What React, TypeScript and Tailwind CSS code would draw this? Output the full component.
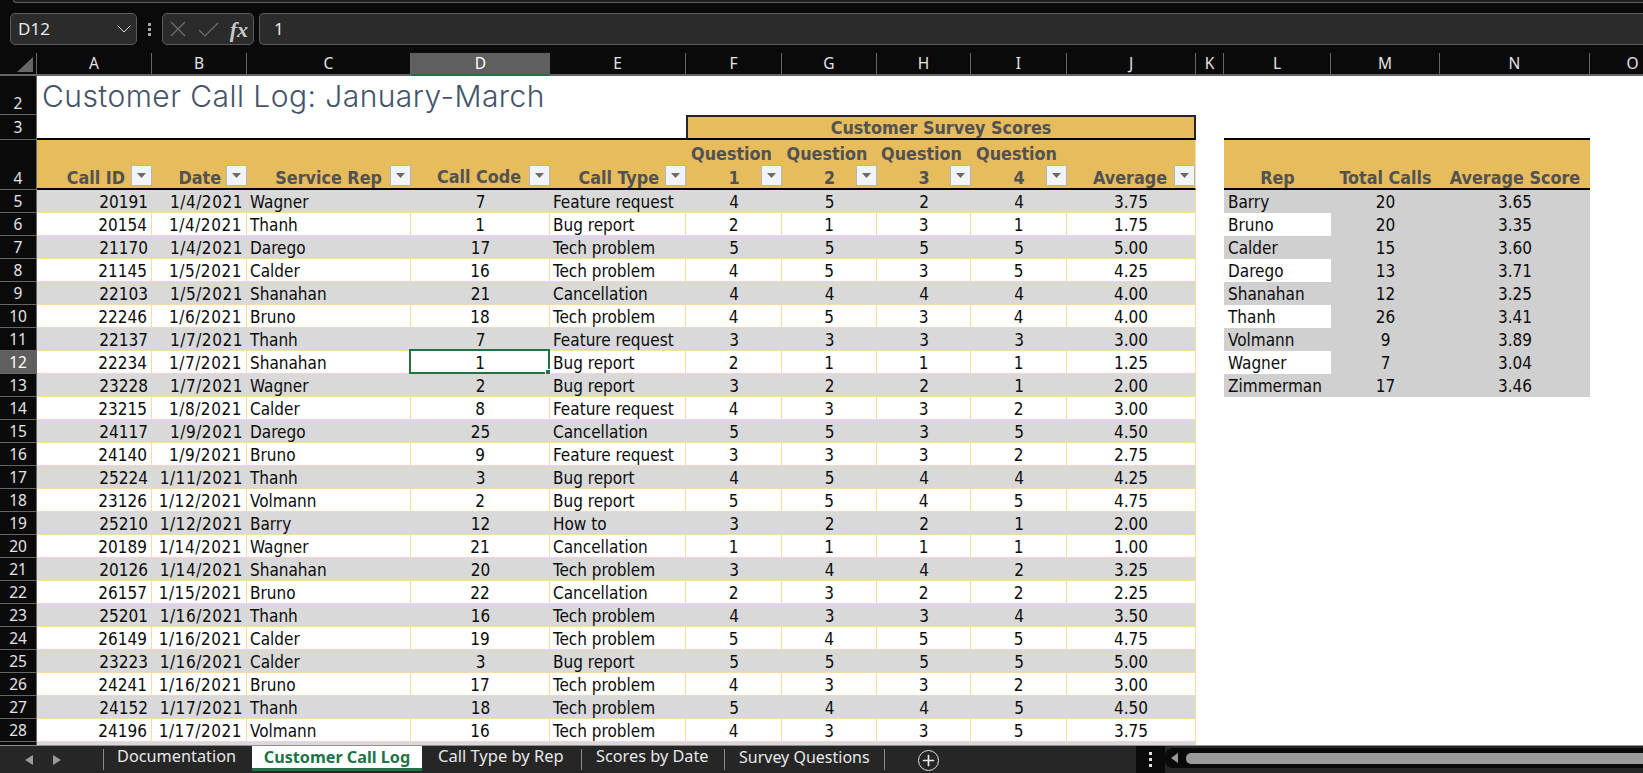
import React from "react";
import { ChevronDown, Plus } from "lucide-react";

const GRID = "grid grid-cols-[37px_115px_95px_164px_139px_136px_96px_95px_94px_96px_129px_28px_107px_109px_150px_86px]";
const CELLFONT = "font-['DejaVu_Sans_Condensed','DejaVu_Sans',sans-serif] text-[17px] pt-[2px] leading-[20px] text-[#0c0c0c]";
const HEADFONT = "font-['DejaVu_Sans_Condensed','DejaVu_Sans',sans-serif] font-bold text-[17.8px] text-[#525252]";
const UIFONT = "font-['Noto_Sans','Open_Sans',sans-serif]";

const DATA: [string, string, string, string, string, string, string, string, string, string][] = [
  ["20191", "1/4/2021", "Wagner", "7", "Feature request", "4", "5", "2", "4", "3.75"],
  ["20154", "1/4/2021", "Thanh", "1", "Bug report", "2", "1", "3", "1", "1.75"],
  ["21170", "1/4/2021", "Darego", "17", "Tech problem", "5", "5", "5", "5", "5.00"],
  ["21145", "1/5/2021", "Calder", "16", "Tech problem", "4", "5", "3", "5", "4.25"],
  ["22103", "1/5/2021", "Shanahan", "21", "Cancellation", "4", "4", "4", "4", "4.00"],
  ["22246", "1/6/2021", "Bruno", "18", "Tech problem", "4", "5", "3", "4", "4.00"],
  ["22137", "1/7/2021", "Thanh", "7", "Feature request", "3", "3", "3", "3", "3.00"],
  ["22234", "1/7/2021", "Shanahan", "1", "Bug report", "2", "1", "1", "1", "1.25"],
  ["23228", "1/7/2021", "Wagner", "2", "Bug report", "3", "2", "2", "1", "2.00"],
  ["23215", "1/8/2021", "Calder", "8", "Feature request", "4", "3", "3", "2", "3.00"],
  ["24117", "1/9/2021", "Darego", "25", "Cancellation", "5", "5", "3", "5", "4.50"],
  ["24140", "1/9/2021", "Bruno", "9", "Feature request", "3", "3", "3", "2", "2.75"],
  ["25224", "1/11/2021", "Thanh", "3", "Bug report", "4", "5", "4", "4", "4.25"],
  ["23126", "1/12/2021", "Volmann", "2", "Bug report", "5", "5", "4", "5", "4.75"],
  ["25210", "1/12/2021", "Barry", "12", "How to", "3", "2", "2", "1", "2.00"],
  ["20189", "1/14/2021", "Wagner", "21", "Cancellation", "1", "1", "1", "1", "1.00"],
  ["20126", "1/14/2021", "Shanahan", "20", "Tech problem", "3", "4", "4", "2", "3.25"],
  ["26157", "1/15/2021", "Bruno", "22", "Cancellation", "2", "3", "2", "2", "2.25"],
  ["25201", "1/16/2021", "Thanh", "16", "Tech problem", "4", "3", "3", "4", "3.50"],
  ["26149", "1/16/2021", "Calder", "19", "Tech problem", "5", "4", "5", "5", "4.75"],
  ["23223", "1/16/2021", "Calder", "3", "Bug report", "5", "5", "5", "5", "5.00"],
  ["24241", "1/16/2021", "Bruno", "17", "Tech problem", "4", "3", "3", "2", "3.00"],
  ["24152", "1/17/2021", "Thanh", "18", "Tech problem", "5", "4", "4", "5", "4.50"],
  ["24196", "1/17/2021", "Volmann", "16", "Tech problem", "4", "3", "3", "5", "3.75"],
];

const SIDE: [string, string, string][] = [
  ["Barry", "20", "3.65"],
  ["Bruno", "20", "3.35"],
  ["Calder", "15", "3.60"],
  ["Darego", "13", "3.71"],
  ["Shanahan", "12", "3.25"],
  ["Thanh", "26", "3.41"],
  ["Volmann", "9", "3.89"],
  ["Wagner", "7", "3.04"],
  ["Zimmerman", "17", "3.46"],
];

const COLS = ["A", "B", "C", "D", "E", "F", "G", "H", "I", "J", "K", "L", "M", "N", "O"];

function Filter() {
  return (
    <span className="absolute right-0 bottom-[2px] flex h-[21px] w-[21px] items-center justify-center border border-[#aeb6c6] bg-[#f1f3f6]">
      <svg width="9" height="5" viewBox="0 0 9 5">
        <path d="M0 0h9L4.5 5z" fill="#6a6a6a" />
      </svg>
    </span>
  );
}

function RowNum({ n, selected, align = "center" }: { n: string; selected?: boolean; align?: "center" | "bottom" }) {
  return (
    <div
      className={`flex justify-center border-r border-b border-[#666666] ${UIFONT} text-[15.5px] leading-[21px] ${
        align === "bottom" ? "items-end" : "items-center pt-[1px]"
      } ${selected ? "bg-[#5f5f5f] text-white" : "bg-[#0a0a0a] text-[#e4e4e4]"}`}
    >
      {n}
    </div>
  );
}

function Head({ label, cls = "", filter = true }: { label: React.ReactNode; cls?: string; filter?: boolean }) {
  return (
    <div className={`relative flex items-end border-b-2 border-black bg-[#e6bc5c] ${HEADFONT} leading-[23px] ${cls}`}>
      <span className="-mb-[1px]">{label}</span>
      {filter && <Filter />}
    </div>
  );
}

function Row({ n, row, side }: { n: number; row?: string[]; side?: string[] }) {
  const gray = (n - 5) % 2 === 0;
  const bg = gray ? "bg-[#d9d9d9]" : "bg-white";
  const grid = gray ? "" : "border-r border-[#e2e2e2]";
  const base = `border-b border-[#f6dba4] ${bg} ${CELLFONT}`;
  const selectedRow = n === 12;
  const sideL = side ? (gray ? "bg-[#d0d0d0]" : "bg-white") : "bg-white";
  const sideFill = side ? "bg-[#d0d0d0]" : "bg-white";
  return (
    <div className={`${GRID} h-[23px] shrink-0`}>
      <RowNum n={row ? String(n) : ""} selected={selectedRow} />
      <div className={`${base} ${grid} pr-[4px] text-right`}>{row?.[0]}</div>
      <div className={`${base} ${grid} pr-[4px] text-right tracking-[0.55px]`}>{row?.[1]}</div>
      <div className={`${base} ${grid} pl-[3px]`}>{row?.[2]}</div>
      <div className={`${base} ${grid} relative text-center`}>
        {row?.[3]}
        {selectedRow && (
          <span className="absolute -top-[2px] -right-[1px] -bottom-[1px] -left-[2px] border-2 border-[#217346]">
            <span className="absolute -right-[3px] -bottom-[3px] h-[6px] w-[6px] border border-white bg-[#217346]" />
          </span>
        )}
      </div>
      <div className={`${base} ${grid} pl-[3px]`}>{row?.[4]}</div>
      <div className={`${base} ${grid} text-center`}>{row?.[5]}</div>
      <div className={`${base} ${grid} text-center`}>{row?.[6]}</div>
      <div className={`${base} ${grid} text-center`}>{row?.[7]}</div>
      <div className={`${base} ${grid} text-center`}>{row?.[8]}</div>
      <div className={`${base} border-r border-[#f6dba4] text-center`}>{row?.[9]}</div>
      <div className="bg-white" />
      <div className={`${sideL} ${CELLFONT} pl-[4px]`}>{side?.[0]}</div>
      <div className={`${sideFill} ${CELLFONT} text-center`}>{side?.[1]}</div>
      <div className={`${sideFill} ${CELLFONT} text-center`}>{side?.[2]}</div>
      <div className="bg-white" />
    </div>
  );
}

function ActiveTab({ label }: { label: string }) {
  return (
    <div className={`flex h-[25px] w-[170px] shrink-0 items-center justify-center border-b-[3px] border-[#217346] bg-white font-bold text-[#217346] ${UIFONT} text-[16.2px]`}>
      {label}
    </div>
  );
}

function Tab({ label, cls }: { label: string; cls: string }) {
  return <div className={`flex h-[25px] shrink-0 items-center pb-[4px] text-[#e8e8e8] ${UIFONT} ${cls}`}>{label}</div>;
}

const Sep = () => <div className="mt-[3px] h-[21px] w-px shrink-0 bg-[#8a8a8a]" />;

export default function App() {
  return (
    <div className="flex h-screen w-full flex-col overflow-hidden bg-[#0a0a0a]">
      {/* ribbon edge */}
      <div className="h-[13px] shrink-0 pl-[13px]">
        <div className="h-[3px] rounded-bl-[6px] border-b border-l border-[#5c5c5c] bg-[#1f1f1f]" />
      </div>

      {/* formula bar */}
      <div className="flex h-[32px] shrink-0 items-stretch pl-[10px]">
        <div className={`flex w-[127px] items-center justify-between rounded-[5px] border border-[#5c5c5c] bg-[#2b2b2b] pl-[7px] ${UIFONT} text-[17px] text-[#e8e8e8]`}>
          D12
          <ChevronDown size={24} strokeWidth={1} color="#d8d8d8" />
        </div>
        <div className="flex w-[25px] flex-col items-center justify-center gap-[2px]">
          <span className="h-[3px] w-[3px] bg-[#a8a8a8]" />
          <span className="h-[3px] w-[3px] bg-[#a8a8a8]" />
          <span className="h-[3px] w-[3px] bg-[#a8a8a8]" />
        </div>
        <div className="flex w-[92px] items-center rounded-[5px] border border-[#5c5c5c] bg-[#2b2b2b] pr-[5px] pl-[7px]">
          <svg width="16" height="16" viewBox="0 0 16 16" fill="none" stroke="#6f6f6f" strokeWidth="1.2">
            <path d="M1 1l14 14M15 1L1 15" />
          </svg>
          <svg className="ml-[12px]" width="21" height="15" viewBox="0 0 21 15" fill="none" stroke="#6f6f6f" strokeWidth="1.2">
            <path d="M1 8l6 6L20 1" />
          </svg>
          <span className="ml-auto font-['Liberation_Serif',serif] text-[22px] font-bold text-[#c8c8c8] italic">fx</span>
        </div>
        <div className={`ml-[5px] flex flex-1 items-center rounded-l-[5px] border border-r-0 border-[#5c5c5c] bg-[#2b2b2b] pl-[14px] ${UIFONT} text-[17px] text-[#e8e8e8]`}>
          1
        </div>
      </div>

      <div className="h-[8px] shrink-0" />

      {/* column headers */}
      <div className={`${GRID} h-[23px] shrink-0`}>
        <div className="relative border-r border-b-2 border-[#666666]">
          <svg className="absolute top-[4px] right-[3px]" width="16" height="15" viewBox="0 0 16 15">
            <path d="M16 0v15H0z" fill="#666666" />
          </svg>
        </div>
        {COLS.map((c) => (
          <div
            key={c}
            className={`flex items-center justify-center border-b-2 ${UIFONT} text-[15.5px] leading-[21px] ${
              c === "D"
                ? "border-[#217346] bg-[#5f5f5f] text-white"
                : "border-r border-[#666666] text-[#e4e4e4]"
            }`}
          >
            {c}
          </div>
        ))}
      </div>

      {/* sheet */}
      <div className="min-h-0 flex-1 overflow-hidden">
        {/* row 2 */}
        <div className={`${GRID} h-[39px]`}>
          <RowNum n="2" align="bottom" />
          <div className="col-span-15 flex items-end bg-white pb-[1px] pl-[5px]">
            <span className="font-['Inter',sans-serif] text-[30px] leading-[36px] font-light tracking-[0.45px] text-[#44546a]">
              Customer Call Log: January-March
            </span>
          </div>
        </div>
        {/* row 3 */}
        <div className={`${GRID} h-[25px]`}>
          <RowNum n="3" />
          <div className="col-span-5 border-b-2 border-black bg-white" />
          <div className={`col-span-5 flex items-center justify-center border-x-2 border-t-2 border-b-2 border-x-[#262626] border-t-[#262626] border-b-black bg-[#e6bc5c] ${HEADFONT} leading-[21px]`}>
            Customer Survey Scores
          </div>
          <div className="bg-white" />
          <div className="col-span-3 border-b-2 border-black bg-white" />
          <div className="bg-white" />
        </div>
        {/* row 4 */}
        <div className={`${GRID} h-[50px]`}>
          <RowNum n="4" align="bottom" />
          <Head label="Call ID" cls="justify-end pr-[27px]" />
          <Head label="Date" cls="justify-end pr-[26px]" />
          <Head label="Service Rep" cls="justify-end pr-[29px]" />
          <Head label="Call Code" cls="justify-end pr-[29px] pb-[1px]" />
          <Head label="Call Type" cls="justify-end pr-[27px]" />
          {["1", "2", "3", "4"].map((q) => (
            <Head
              key={q}
              cls="justify-center"
              label={
                <span className="block text-center">
                  <span className="block pr-[5px] pb-[1px]">Question</span>
                  {q}
                </span>
              }
            />
          ))}
          <Head label="Average" cls="justify-end pr-[28px] border-r border-r-[#f6dba4]" />
          <div className="bg-white" />
          <Head label="Rep" filter={false} cls="justify-center" />
          <Head label="Total Calls" filter={false} cls="justify-center" />
          <Head label="Average Score" filter={false} cls="justify-center" />
          <div className="bg-white" />
        </div>
        {DATA.map((r, i) => (
          <Row key={r[0]} n={i + 5} row={r} side={SIDE[i]} />
        ))}
        <Row n={29} />
      </div>

      {/* tab bar */}
      <div className="flex h-[28px] shrink-0 items-start border-t border-[#8f8f8f] bg-[#262626]">
        <div className="flex h-full w-[103px] shrink-0 items-center pl-[25px]">
          <svg width="8" height="10" viewBox="0 0 8 10">
            <path d="M8 0v10L0 5z" fill="#9a9a9a" />
          </svg>
          <svg className="ml-[20px]" width="8" height="10" viewBox="0 0 8 10">
            <path d="M0 0v10l8-5z" fill="#9a9a9a" />
          </svg>
        </div>
        <Sep />
        <Tab label="Documentation" cls="w-[148px] pl-[13px] text-[16.3px]" />
        <ActiveTab label="Customer Call Log" />
        <Tab label="Call Type by Rep" cls="w-[159px] pl-[16px] text-[16.5px]" />
        <Sep />
        <Tab label="Scores by Date" cls="w-[142px] pl-[14px] text-[16.3px]" />
        <Sep />
        <Tab label="Survey Questions" cls="w-[159px] pl-[14px] text-[16px]" />
        <Sep />
        <div className="mt-[4px] ml-[33px] flex h-[21px] w-[21px] shrink-0 items-center justify-center rounded-full border-[1.5px] border-[#e0e0e0]">
          <Plus size={17} strokeWidth={2.4} color="#e8e8e8" />
        </div>
        <div className="flex-1" />
        <div className="flex h-full w-[29px] shrink-0 flex-col items-center justify-center gap-[3px] bg-[#0a0a0a]">
          <span className="h-[3px] w-[3px] bg-[#e0e0e0]" />
          <span className="h-[3px] w-[3px] bg-[#e0e0e0]" />
          <span className="h-[3px] w-[3px] bg-[#e0e0e0]" />
        </div>
        <div className="mt-[2px] flex h-[20px] w-[478px] shrink-0 items-center rounded-l-[8px] bg-[#0a0a0a] pl-[6px]">
          <svg width="7" height="10" viewBox="0 0 7 10">
            <path d="M7 0v10L0 5z" fill="#9a9a9a" />
          </svg>
          <div className="ml-[8px] h-[11px] flex-1 rounded-l-[5px] bg-[#9b9b9b]" />
        </div>
      </div>
    </div>
  );
}
